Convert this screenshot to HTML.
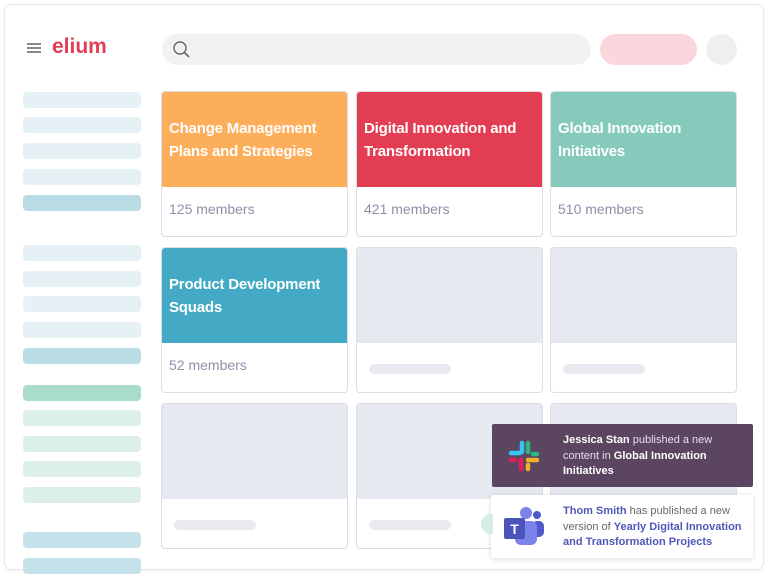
<!DOCTYPE html>
<html><head><style>
*{margin:0;padding:0;box-sizing:border-box}
body{width:768px;height:574px;background:#fff;font-family:"Liberation Sans",sans-serif;position:relative;overflow:hidden}
.frame{position:absolute;left:4px;top:4px;width:760px;height:566px;border:1px solid #e6e6ea;border-radius:8px;box-shadow:0 1px 4px rgba(0,0,0,.06)}
.a{position:absolute}
.bar{position:absolute;left:23px;width:118px;height:16px;border-radius:4px;background:#e6f1f5}
.card{position:absolute;width:187px;height:146px;border:1px solid #dcdde5;border-radius:4px;background:#fff;overflow:hidden}
.card .h{height:95px;padding:25px 8px 0 7px;color:#fff;font-weight:bold;font-size:15px;line-height:23px;letter-spacing:-0.2px}
.card .m{padding:14px 7px;color:#8d90a8;font-size:14px}
.card.e .h{background:#e6e9f0}
.sk{position:absolute;left:12px;top:116px;width:82px;height:10px;border-radius:5px;background:#e8eaef}
</style></head><body>
<div class="frame"></div>
<div class="a" style="left:27px;top:43px;width:14px;height:2px;background:#888;box-shadow:0 4px 0 #888,0 8px 0 #888"></div>
<div class="a" style="left:52px;top:35px;color:#e33d55;font-weight:bold;font-size:21px">elium</div>
<div class="a" style="left:162px;top:34px;width:429px;height:31px;border-radius:16px;background:#f2f2f3"></div>
<svg class="a" style="left:172px;top:40px" width="20" height="20" viewBox="0 0 20 20"><circle cx="8" cy="8" r="6" fill="none" stroke="#666" stroke-width="1.4"/><path d="M12.5 12.5L17 17" stroke="#666" stroke-width="1.6"/></svg>
<div class="a" style="left:600px;top:34px;width:97px;height:31px;border-radius:16px;background:#f9d7dd"></div>
<div class="a" style="left:706px;top:34px;width:31px;height:31px;border-radius:50%;background:#efefef"></div>

<div class="bar" style="top:92px"></div><div class="bar" style="top:117px"></div><div class="bar" style="top:143px"></div><div class="bar" style="top:169px"></div><div class="bar" style="top:195px;background:#badde5"></div>
<div class="bar" style="top:245px"></div><div class="bar" style="top:271px"></div><div class="bar" style="top:296px"></div><div class="bar" style="top:322px"></div><div class="bar" style="top:348px;background:#badde5"></div>
<div class="bar" style="top:385px;background:#a9dccd"></div><div class="bar" style="top:410px;background:#dcefea"></div><div class="bar" style="top:436px;background:#dcefea"></div><div class="bar" style="top:461px;background:#dcefea"></div><div class="bar" style="top:487px;background:#dcefea"></div>
<div class="bar" style="top:532px;background:#c5e1ea"></div><div class="bar" style="top:558px;background:#c5e1ea"></div>

<div class="card" style="left:161px;top:91px"><div class="h" style="background:#fdae5b">Change Management Plans and Strategies</div><div class="m">125 members</div></div>
<div class="card" style="left:356px;top:91px"><div class="h" style="background:#e23d52">Digital Innovation and Transformation</div><div class="m">421 members</div></div>
<div class="card" style="left:550px;top:91px"><div class="h" style="background:#86cabb">Global Innovation Initiatives</div><div class="m">510 members</div></div>
<div class="card" style="left:161px;top:247px"><div class="h" style="background:#44a9c4">Product Development Squads</div><div class="m">52 members</div></div>
<div class="card e" style="left:356px;top:247px"><div class="h"></div><div class="sk"></div></div>
<div class="card e" style="left:550px;top:247px"><div class="h"></div><div class="sk"></div></div>
<div class="card e" style="left:161px;top:403px"><div class="h"></div><div class="sk"></div></div>
<div class="card e" style="left:356px;top:403px"><div class="h"></div><div class="sk"></div></div>
<div class="card e" style="left:550px;top:403px"><div class="h"></div></div>

<div class="a" style="left:492px;top:424px;width:261px;height:63px;background:#5b4561;border-radius:2px;color:#e6dde8;font-size:11px;line-height:15.5px;padding:9px 10px 0 71px"><b style="color:#fff">Jessica Stan</b> published a new content in <b style="color:#fff">Global Innovation Initiatives</b></div>
<svg class="a" style="left:506px;top:438px" width="36" height="36" viewBox="0 0 36 36"><g stroke-linecap="round" stroke-width="4.5"><path d="M16 5v9M5 15h9" stroke="#36c5f0"/><path d="M22 5v9M27 16h4" stroke="#2eb67d"/><path d="M22 22h9M22 27v4" stroke="#ecb22e"/><path d="M15 22v9M5 22h4" stroke="#e01e5a"/></g></svg>
<div class="a" style="left:491px;top:495px;width:262px;height:63px;background:#fff;box-shadow:0 1px 6px rgba(0,0,0,.15);border-radius:2px;color:#666;font-size:11px;line-height:15.5px;padding:9px 10px 0 72px"><b style="color:#4f57b8">Thom Smith</b> has published a new version of <b style="color:#4f57b8">Yearly Digital Innovation and Transformation Projects</b></div>
<svg class="a" style="left:502px;top:506px" width="44" height="42" viewBox="0 0 44 42"><circle cx="35" cy="9" r="4" fill="#5059c9"/><rect x="30" y="15" width="12" height="16" rx="5" fill="#5059c9"/><circle cx="24" cy="7" r="6" fill="#7b83eb"/><rect x="13" y="15" width="22" height="24" rx="6" fill="#7b83eb"/><rect x="2" y="12" width="21" height="21" rx="2" fill="#4b53bc"/><text x="12.5" y="28" font-size="14" font-weight="bold" fill="#fff" text-anchor="middle" font-family="Liberation Sans">T</text></svg>
<div class="a" style="left:481px;top:514px;width:12px;height:20px;border-radius:10px 0 0 10px;background:#d7ece6"></div>
</body></html>
